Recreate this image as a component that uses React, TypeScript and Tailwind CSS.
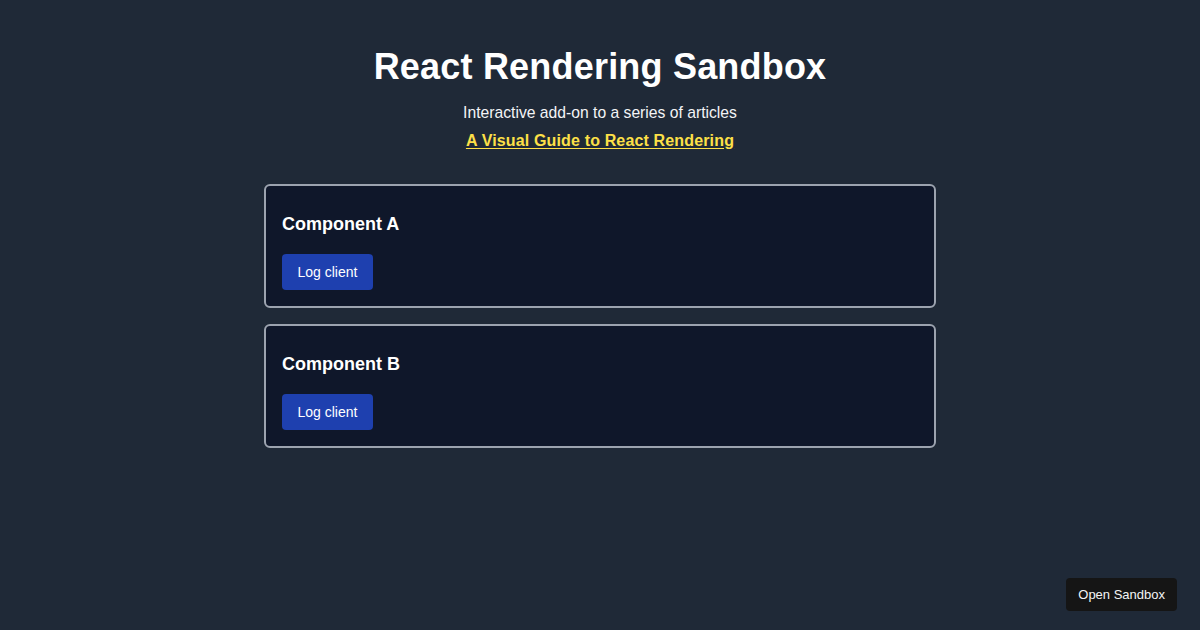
const COMPONENTS = ["Component A", "Component B"] as const;

export default function App() {
  return (
    <div
      className="min-h-screen bg-[#1f2937] text-white"
      style={{ fontFamily: '"Liberation Sans", Arial, sans-serif' }}
    >
      <main className="mx-auto flex max-w-[672px] flex-col items-center pt-[47px]">
        <h1 className="text-4xl font-bold tracking-[0.2px]">React Rendering Sandbox</h1>
        <p className="mt-[14px] text-[15.7px] text-gray-100">
          Interactive add-on to a series of articles
        </p>
        <a
          href="#"
          className="mt-1 font-bold tracking-[0.15px] text-[#fde047] underline underline-offset-2"
        >
          A Visual Guide to React Rendering
        </a>

        <div className="mt-[31px] flex w-full flex-col gap-4">
          {COMPONENTS.map((name) => (
            <section
              key={name}
              className="rounded-md border-2 border-[#9ca3af] bg-[#0f172a] px-4 pb-4 pt-6"
            >
              <h2 className="text-lg font-bold">{name}</h2>
              <button className="mt-4 h-9 rounded bg-[#1e40af] px-[15.5px] text-sm text-white">
                Log client
              </button>
            </section>
          ))}
        </div>
      </main>

      <button className="fixed bottom-[19px] right-[23px] h-[33px] rounded bg-[#151515] px-3 text-[13px] text-gray-100">
        Open Sandbox
      </button>
    </div>
  );
}
